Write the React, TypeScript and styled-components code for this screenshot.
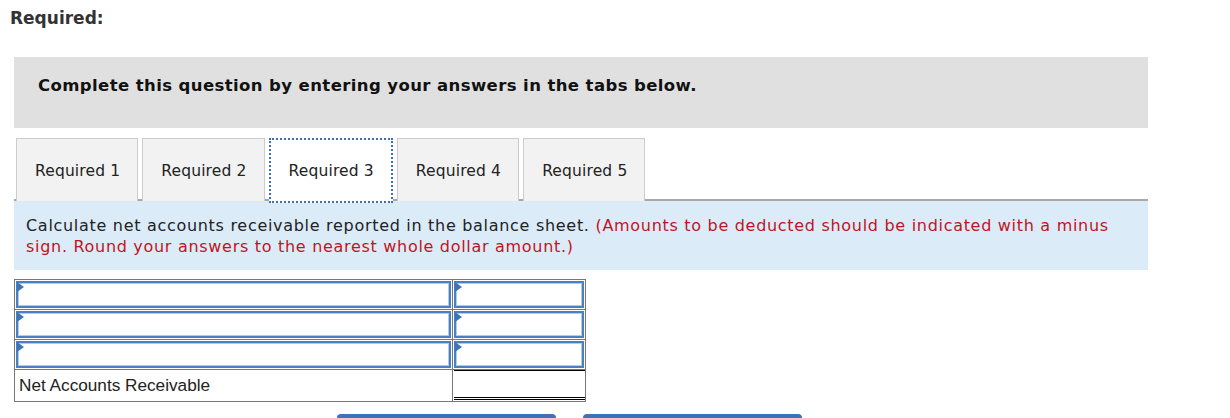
import styled, { createGlobalStyle } from "styled-components";

const GlobalStyle = createGlobalStyle`
	body {
		margin: 0;
		background: #fff;
		font-family: "DejaVu Sans", Verdana, sans-serif;
		color: #222;
	}
`;

const Page = styled.div`
	width: 1230px;
	height: 418px;
	overflow: hidden;
	padding: 8px 0 0 14px;
	box-sizing: border-box;
`;

const Title = styled.h2`
	margin: 0 0 29px -4px;
	font-size: 17px;
	line-height: 20px;
	font-weight: bold;
	color: #333;
`;

const Banner = styled.div`
	width: 1134px;
	height: 71px;
	box-sizing: border-box;
	background: #e0e0e0;
	padding: 19px 24px 0;
	font-size: 16.5px;
	letter-spacing: 0.4px;
	font-weight: bold;
	color: #111;
	line-height: 20px;
`;

const TabRow = styled.div`
	display: flex;
	gap: 4px;
	width: 1134px;
	box-sizing: border-box;
	margin-top: 10px;
	padding-left: 2px;
	border-bottom: 2px solid #a8a8a8;
	height: 63px;
`;

const Tab = styled.button<{ $active?: boolean }>`
	font-family: "DejaVu Sans", Verdana, sans-serif;
	font-size: 15.5px;
	letter-spacing: 0.15px;
	color: #222;
	box-sizing: border-box;
	padding: ${(p) => (p.$active ? "1px" : "2px")} 17px 0 18px;
	background: ${(p) => (p.$active ? "#fff" : "#f2f2f2")};
	border: ${(p) => (p.$active ? "2px dotted #3d6fb8" : "1px solid #cccccc")};
	border-bottom: ${(p) => (p.$active ? "2px dotted #3d6fb8" : "none")};
	margin-bottom: ${(p) => (p.$active ? "-2px" : "0")};
	height: ${(p) => (p.$active ? "65px" : "63px")};
	cursor: pointer;
`;

const Info = styled.div`
	width: 1134px;
	height: 69px;
	box-sizing: border-box;
	background: #dcebf8;
	padding: 14px 12px 0;
	font-size: 16px;
	letter-spacing: 0.7px;
	line-height: 21px;
	color: #222;
`;

const Hint = styled.span`
	color: #c0141e;
`;

const Sheet = styled.table`
	margin-top: 9px;
	border-collapse: collapse;
	width: 572px;
	font-family: "Liberation Sans", Arial, sans-serif;
`;

const Cell = styled.td<{ $wide?: boolean }>`
	border: 1px solid #777;
	padding: 1px;
	width: ${(p) => (p.$wide ? "436px" : "132px")};
	height: 28px;
	box-sizing: border-box;
	position: relative;
	vertical-align: middle;
`;

const LabelCell = styled.td`
	border: 1px solid #777;
	padding: 0 4px;
	height: 30px;
	font-size: 17.2px;
	color: #222;
`;

const TotalCell = styled.td`
	border: 1px solid #777;
	padding: 0 0 1px 1px;
	height: 30px;
	vertical-align: bottom;
`;

const TotalBox = styled.div`
	height: 26px;
	border-top: 1px solid #000;
	border-bottom: 3px double #000;
`;

const Field = styled.input`
	display: block;
	width: 100%;
	height: 27px;
	box-sizing: border-box;
	border: 2px solid #4a7fc2;
	box-shadow: inset 0 0 0 1px #b3cbea;
	background: #fff;
	outline: none;
	font-size: 15px;
`;

const Marker = styled.span`
	position: absolute;
	left: 2px;
	top: 2px;
	width: 0;
	height: 0;
	border-top: 5px solid transparent;
	border-bottom: 5px solid transparent;
	border-left: 7px solid #3d74b9;
`;

const Buttons = styled.div`
	display: flex;
	gap: 27px;
	padding-left: 323px;
	margin-top: 12px;
`;

const NavButton = styled.button`
	width: 219px;
	height: 36px;
	border: none;
	border-radius: 4px;
	background: #3b73b9;
`;

function InputRow() {
	return (
		<tr>
			<Cell $wide>
				<Field />
				<Marker />
			</Cell>
			<Cell>
				<Field />
				<Marker />
			</Cell>
		</tr>
	);
}

export default function App(): JSX.Element {
	const tabs = ["Required 1", "Required 2", "Required 3", "Required 4", "Required 5"];
	return (
		<>
			<GlobalStyle />
			<Page>
				<Title>Required:</Title>
				<Banner>Complete this question by entering your answers in the tabs below.</Banner>
				<TabRow>
					{tabs.map((t) => (
						<Tab key={t} $active={t === "Required 3"}>
							{t}
						</Tab>
					))}
				</TabRow>
				<Info>
					Calculate net accounts receivable reported in the balance sheet.{" "}
					<Hint>
						(Amounts to be deducted should be indicated with a minus
						<br />
						sign. Round your answers to the nearest whole dollar amount.)
					</Hint>
				</Info>
				<Sheet>
					<tbody>
						<InputRow />
						<InputRow />
						<InputRow />
						<tr>
							<LabelCell>Net Accounts Receivable</LabelCell>
							<TotalCell>
								<TotalBox />
							</TotalCell>
						</tr>
					</tbody>
				</Sheet>
				<Buttons>
					<NavButton />
					<NavButton />
				</Buttons>
			</Page>
		</>
	);
}
